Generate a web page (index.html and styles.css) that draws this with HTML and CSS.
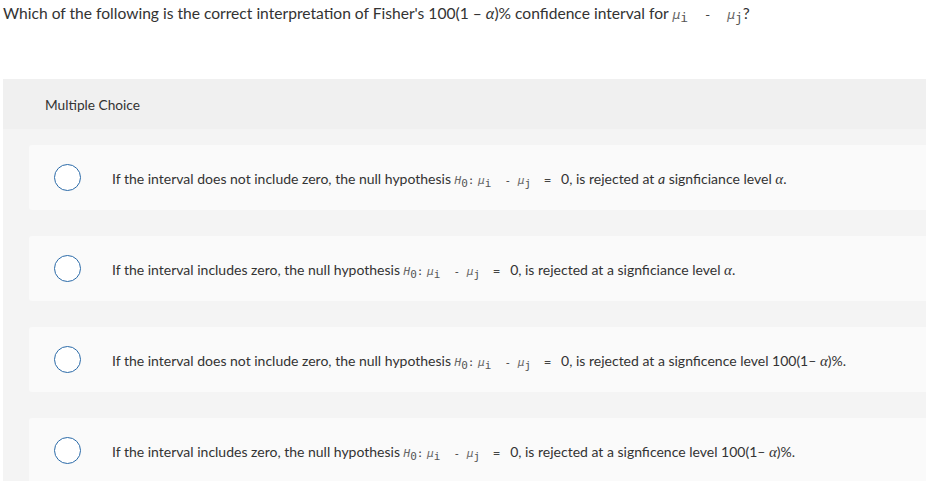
FILE: index.html
```html
<!DOCTYPE html>
<html>
<head>
<meta charset="utf-8">
<link rel="stylesheet" href="styles.css">
</head>
<body>
<p class="question">Which of the following is the correct interpretation of Fisher's 100(1 &ndash; <i class="a">α</i>)% confidence interval for <span class="m"><i>μ</i><sub>i</sub>&nbsp; -&nbsp;&nbsp;<i>μ</i><sub>j</sub></span>?</p>
<div class="panel">
  <div class="panel-head">Multiple Choice</div>
  <div class="choices">
    <div class="card">
      <span class="radio"></span>
      <span class="text">If the interval does not include zero, the null hypothesis <span class="m"><i>H</i><sub>0</sub>:</span> <span class="m"><i>μ</i><sub>i</sub>&nbsp; -&nbsp;<i>μ</i><sub>j</sub>&nbsp; =&nbsp;</span> 0, is rejected at <i class="ia">a</i> signficiance level <i class="g">α</i>.</span>
    </div>
    <div class="card">
      <span class="radio"></span>
      <span class="text">If the interval includes zero, the null hypothesis <span class="m"><i>H</i><sub>0</sub>:</span> <span class="m"><i>μ</i><sub>i</sub>&nbsp; -&nbsp;<i>μ</i><sub>j</sub>&nbsp; =&nbsp;</span> 0, is rejected at a signficiance level <i class="g">α</i>.</span>
    </div>
    <div class="card">
      <span class="radio"></span>
      <span class="text">If the interval does not include zero, the null hypothesis <span class="m"><i>H</i><sub>0</sub>:</span> <span class="m"><i>μ</i><sub>i</sub>&nbsp; -&nbsp;<i>μ</i><sub>j</sub>&nbsp; =&nbsp;</span> 0, is rejected at a signficence level 100(1&ndash; <i class="g">α</i>)%.</span>
    </div>
    <div class="card">
      <span class="radio"></span>
      <span class="text">If the interval includes zero, the null hypothesis <span class="m"><i>H</i><sub>0</sub>:</span> <span class="m"><i>μ</i><sub>i</sub>&nbsp; -&nbsp;<i>μ</i><sub>j</sub>&nbsp; =&nbsp;</span> 0, is rejected at a signficence level 100(1&ndash; <i class="g">α</i>)%.</span>
    </div>
  </div>
</div>
</body>
</html>
```
FILE: styles.css
```css
html, body {
  margin: 0;
  padding: 0;
  background: #ffffff;
  overflow: hidden;
}
body {
  font-family: "Lato", "Open Sans", sans-serif;
  color: #333333;
  width: 926px;
  height: 481px;
}
.question {
  margin: 0;
  padding: 4px 0 0 3px;
  font-size: 15.6px;
  line-height: 18px;
  height: 74px;
  box-sizing: border-box;
}
.question .a {
  font-style: italic;
}
.question .m {
  font-size: 13px;
}
.m {
  font-family: "DejaVu Sans Mono", "Liberation Mono", monospace;
  font-size: 11px;
  color: #444;
}
.m i {
  font-style: italic;
  color: #666;
}
.m sub {
  font-size: 1em;
  vertical-align: -3px;
  line-height: 0;
  color: #555;
}
.panel {
  margin-left: 3px;
  margin-top: 5px;
  background: #f4f4f4;
  height: 410px;
}
.panel-head {
  height: 50px;
  background: #f0f0f0;
  display: flex;
  align-items: center;
  padding-left: 42px;
  font-size: 13.7px;
  color: #333333;
}
.choices {
  padding: 16px 0 0 26px;
  display: flex;
  flex-direction: column;
  gap: 26px;
}
.card {
  height: 65px;
  background: #fafafa;
  border-radius: 3px 0 0 3px;
  display: flex;
  align-items: center;
  padding-left: 25px;
}
.radio {
  width: 27px;
  height: 27px;
  box-sizing: border-box;
  border: 1.5px solid #2a6aa8;
  border-radius: 50%;
  background: #fff;
  flex: none;
  margin-right: 31px;
}
.text {
  font-size: 14px;
  color: #333333;
  white-space: nowrap;
  padding-top: 2px;
}
.text .ia {
  font-style: italic;
}
.g {
  font-family: "Liberation Serif", serif;
  font-style: italic;
  font-size: 15px;
}
```
